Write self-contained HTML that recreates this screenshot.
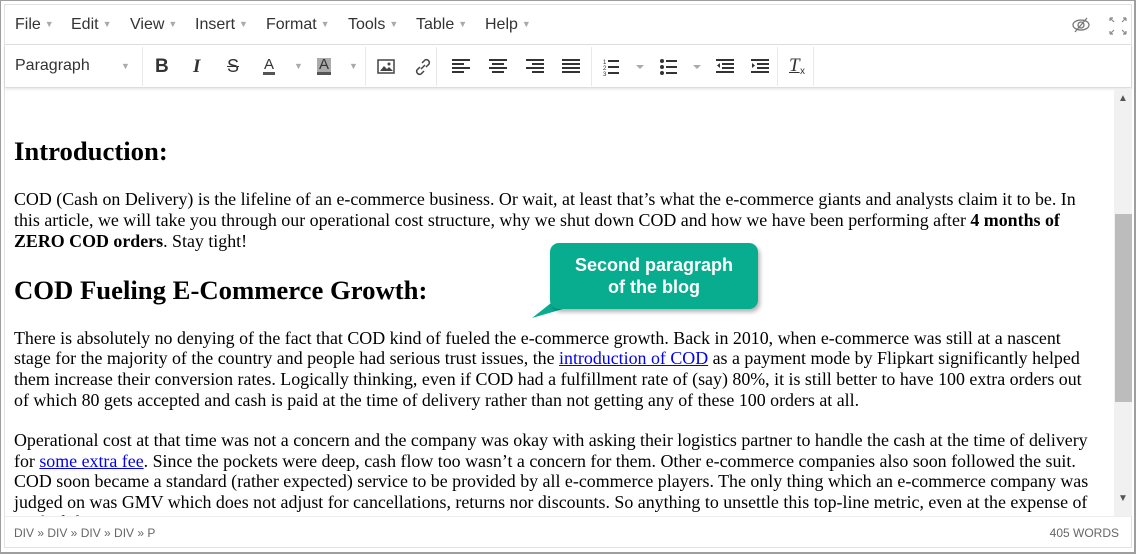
<!DOCTYPE html>
<html><head><style>
*{box-sizing:border-box;margin:0;padding:0}
body{width:1136px;height:554px;overflow:hidden;background:#fff;font-family:"Liberation Sans",sans-serif}
.outer{position:absolute;left:0;top:0;width:1136px;height:554px;border:1px solid #9e9e9e;border-right-width:2px;border-bottom-width:2px}
.inner{position:absolute;left:4px;top:4px;width:1128px;height:544px;border:1px solid #e2e2e2}
.menubar{position:absolute;left:0;top:0;width:1126px;height:40px;border-bottom:1px solid #e2e2e2;font-size:16px;color:#333}
.menubar span{position:absolute;top:11px}
.menubar span i{font-style:normal;color:#aaa;font-size:9px;margin-left:4px;vertical-align:2px}
.toolbar{position:absolute;left:0;top:40px;width:1126px;height:43px;border-bottom:1px solid #ddd;box-shadow:0 1px 3px rgba(0,0,0,.12)}
.grp{position:absolute;top:2px;height:39px;border-right:1px solid #e8e8e8}
.content{position:absolute;left:0;top:84px;width:1108px;height:427px;overflow:hidden;font-family:"Liberation Serif",serif;font-size:17.9px;color:#000}
.ln{position:absolute;left:9px;white-space:nowrap;line-height:20px}
h2{position:absolute;left:9px;font-size:26.7px;font-weight:bold;white-space:nowrap}
a{color:#00e;text-decoration:underline}
.sb{position:absolute;left:1109px;top:84px;width:18px;height:427px;background:#f1f1f1}
.status{position:absolute;left:0;top:511px;width:1126px;height:32px;border-top:1px solid #eee;font-size:12px;color:#666}
.bubble{position:absolute;left:545px;top:238px;width:208px;height:66px;background:#08ad8f;border-radius:9px;color:#fff;font-weight:bold;font-size:18px;text-align:center;line-height:22px;padding-top:11px;box-shadow:2px 3px 4px rgba(0,0,0,.3)}
</style></head><body>
<div class="outer"></div>
<div class="inner">
<div class="menubar">
<span style="left:10px">File<i>▼</i></span>
<span style="left:66px">Edit<i>▼</i></span>
<span style="left:125px">View<i>▼</i></span>
<span style="left:190px">Insert<i>▼</i></span>
<span style="left:261px">Format<i>▼</i></span>
<span style="left:343px">Tools<i>▼</i></span>
<span style="left:411px">Table<i>▼</i></span>
<span style="left:480px">Help<i>▼</i></span>
<svg style="position:absolute;left:1066px;top:12px" width="20" height="16" viewBox="0 0 20 16" fill="none" stroke="#777" stroke-width="1.3"><ellipse cx="10" cy="8" rx="8" ry="5"/><circle cx="10" cy="8" r="3"/><line x1="4" y1="15" x2="16" y2="1"/></svg>
<svg style="position:absolute;left:1104px;top:12px" width="18" height="18" viewBox="0 0 18 18" fill="none" stroke="#888" stroke-width="1.2"><path d="M1 1l4 4M1 1h3M1 1v3M17 1l-4 4M17 1h-3M17 1v3M1 17l4-4M1 17h3M1 17v-3M17 17l-4-4M17 17h-3M17 17v-3"/></svg>
</div>
<div class="toolbar">
<div class="grp" style="left:0;width:138px"><span style="position:absolute;left:10px;top:10px;font-size:16px;color:#333">Paragraph</span><span style="position:absolute;left:116px;top:14px;font-size:9px;color:#aaa">▼</span></div>
<div class="grp" style="left:139px;width:222px">
<span style="position:absolute;left:11px;top:9px;font-size:19px;font-weight:bold;color:#333">B</span>
<span style="position:absolute;left:49px;top:9px;font-size:19px;font-style:italic;font-family:'Liberation Serif',serif;color:#333;font-weight:bold">I</span>
<span style="position:absolute;left:83px;top:9px;font-size:18px;color:#333;text-decoration:line-through">S</span>
<span style="position:absolute;left:119px;top:11px;font-size:15px;color:#333;border-bottom:3px solid #555;line-height:14px;padding:0 1px">A</span>
<span style="position:absolute;left:150px;top:14px;font-size:9px;color:#aaa">▼</span>
<span style="position:absolute;left:173px;top:11px;font-size:15px;color:#333;background:#aaa;border-bottom:3px solid #555;line-height:14px;padding:0 2px">A</span>
<span style="position:absolute;left:205px;top:14px;font-size:9px;color:#aaa">▼</span>
</div>
<div class="grp" style="left:362px;width:70px">
<svg style="position:absolute;left:10px;top:12px" width="18" height="16"><rect x="1" y="1" width="16" height="13" fill="none" stroke="#444" stroke-width="1.5"/><path d="M3 12l4-5 3 3 2-2 4 4z" fill="#444"/><circle cx="12" cy="5" r="1.5" fill="#444"/></svg>
<svg style="position:absolute;left:46px;top:10px" width="20" height="20" fill="none" stroke="#444" stroke-width="1.5"><path d="M8 12l4-4M9 6l3-3a3 3 0 014 4l-3 3M11 14l-3 3a3 3 0 01-4-4l3-3"/></svg>
</div>
<div class="grp" style="left:433px;width:154px">
<svg style="position:absolute;left:14px;top:12px" width="130" height="16" fill="#333"><rect x="0" y="0" width="18" height="2"/><rect x="0" y="4" width="12" height="2"/><rect x="0" y="8" width="18" height="2"/><rect x="0" y="12" width="12" height="2"/>
<rect x="37" y="0" width="18" height="2"/><rect x="40" y="4" width="12" height="2"/><rect x="37" y="8" width="18" height="2"/><rect x="40" y="12" width="12" height="2"/>
<rect x="74" y="0" width="18" height="2"/><rect x="80" y="4" width="12" height="2"/><rect x="74" y="8" width="18" height="2"/><rect x="80" y="12" width="12" height="2"/>
<rect x="110" y="0" width="18" height="2"/><rect x="110" y="4" width="18" height="2"/><rect x="110" y="8" width="18" height="2"/><rect x="110" y="12" width="18" height="2"/></svg>
</div>
<div class="grp" style="left:588px;width:185px">
<svg style="position:absolute;left:10px;top:11px" width="170" height="18" fill="#333"><text x="0" y="6" font-size="6" font-family="Liberation Sans">1</text><text x="0" y="12" font-size="6" font-family="Liberation Sans">2</text><text x="0" y="18" font-size="6" font-family="Liberation Sans">3</text><rect x="5" y="2" width="11" height="2"/><rect x="5" y="8" width="11" height="2"/><rect x="5" y="14" width="11" height="2"/>
<path d="M33 7h8l-4 4z" fill="#aaa"/>
<circle cx="59" cy="3" r="2"/><circle cx="59" cy="9" r="2"/><circle cx="59" cy="15" r="2"/><rect x="63" y="2" width="11" height="2"/><rect x="63" y="8" width="11" height="2"/><rect x="63" y="14" width="11" height="2"/>
<path d="M90 7h8l-4 4z" fill="#aaa"/>
<rect x="113" y="1" width="18" height="2"/><rect x="119" y="5" width="12" height="2"/><rect x="119" y="9" width="12" height="2"/><rect x="113" y="13" width="18" height="2"/><path d="M117 5v5l-3-2.5z"/>
<rect x="148" y="1" width="18" height="2"/><rect x="154" y="5" width="12" height="2"/><rect x="154" y="9" width="12" height="2"/><rect x="148" y="13" width="18" height="2"/><path d="M149 5v5l3-2.5z"/></svg>
</div>
<div class="grp" style="left:774px;width:35px">
<span style="position:absolute;left:10px;top:8px;font-size:19px;font-style:italic;color:#333;font-family:'Liberation Serif',serif;text-decoration:underline">T</span><span style="position:absolute;left:21px;top:19px;font-size:10px;color:#333">x</span>
</div>
</div>
<div class="content">
<h2 style="top:47px">Introduction:</h2>
<div class="ln" style="top:100px">COD (Cash on Delivery) is the lifeline of an e-commerce business. Or wait, at least that’s what the e-commerce giants and analysts claim it to be. In</div>
<div class="ln" style="top:121px">this article, we will take you through our operational cost structure, why we shut down COD and how we have been performing after <b>4 months of</b></div>
<div class="ln" style="top:142px"><b>ZERO COD orders</b>. Stay tight!</div>
<h2 style="top:186px">COD Fueling E-Commerce Growth:</h2>
<div class="ln" style="top:239px">There is absolutely no denying of the fact that COD kind of fueled the e-commerce growth. Back in 2010, when e-commerce was still at a nascent</div>
<div class="ln" style="top:259px">stage for the majority of the country and people had serious trust issues, the <a>introduction of COD</a> as a payment mode by Flipkart significantly helped</div>
<div class="ln" style="top:280px">them increase their conversion rates. Logically thinking, even if COD had a fulfillment rate of (say) 80%, it is still better to have 100 extra orders out</div>
<div class="ln" style="top:301px">of which 80 gets accepted and cash is paid at the time of delivery rather than not getting any of these 100 orders at all.</div>
<div class="ln" style="top:341px">Operational cost at that time was not a concern and the company was okay with asking their logistics partner to handle the cash at the time of delivery</div>
<div class="ln" style="top:362px">for <a>some extra fee</a>. Since the pockets were deep, cash flow too wasn’t a concern for them. Other e-commerce companies also soon followed the suit.</div>
<div class="ln" style="top:382px">COD soon became a standard (rather expected) service to be provided by all e-commerce players. The only thing which an e-commerce company was</div>
<div class="ln" style="top:403px">judged on was GMV which does not adjust for cancellations, returns nor discounts. So anything to unsettle this top-line metric, even at the expense of</div>
<div class="ln" style="top:423px">profitability was a strict no no.</div>
</div>
<div class="sb"><div style="position:absolute;left:1px;top:125px;width:17px;height:188px;background:#bcbcbc"></div>
<span style="position:absolute;left:4px;top:4px;font-size:10px;color:#555">▲</span><span style="position:absolute;left:4px;top:404px;font-size:10px;color:#555">▼</span></div>
<svg style="position:absolute;left:525px;top:291px" width="60" height="25"><path d="M30 0L2 22 50 8z" fill="#08ad8f"/></svg>
<div class="bubble">Second paragraph<br>of the blog</div>
<div class="status"><span style="position:absolute;left:9px;top:9px">DIV » DIV » DIV » DIV » P</span><span style="position:absolute;right:12px;top:9px">405 WORDS</span></div>
</div>
</body></html>
